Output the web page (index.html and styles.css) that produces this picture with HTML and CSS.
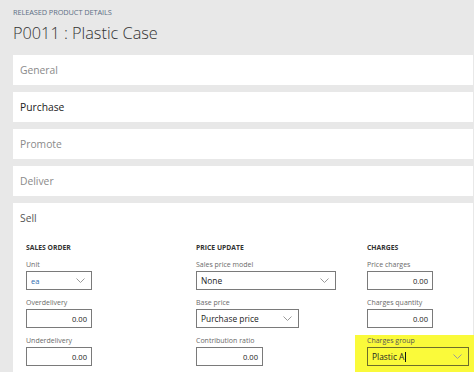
FILE: index.html
```html
<!DOCTYPE html>
<html lang="en">
<head>
    <meta charset="UTF-8">
    <title>Released product details</title>
    <link rel="stylesheet" href="styles.css">
</head>
<body>
    <div class="header">
        <div class="caption">RELEASED PRODUCT DETAILS</div>
        <h1 class="title">P0011 : Plastic Case</h1>
    </div>

    <div class="cards">
        <div class="card muted">General</div>
        <div class="card">Purchase</div>
        <div class="card muted">Promote</div>
        <div class="card muted">Deliver</div>

        <div class="card sell">
            <div class="sell-title">Sell</div>
            <div class="groups">
                <div class="group">
                    <div class="group-title">SALES ORDER</div>
                    <div class="field">
                        <div class="label">Unit</div>
                        <div class="box combo w66"><span class="link">ea</span>
                            <svg class="chev" width="9" height="5" viewBox="0 0 9 5"><polyline points="0.5,0.5 4.5,4.5 8.5,0.5"/></svg>
                        </div>
                    </div>
                    <div class="field">
                        <div class="label">Overdelivery</div>
                        <div class="box num w66">0.00</div>
                    </div>
                    <div class="field">
                        <div class="label">Underdelivery</div>
                        <div class="box num w66">0.00</div>
                    </div>
                </div>

                <div class="group">
                    <div class="group-title">PRICE UPDATE</div>
                    <div class="field">
                        <div class="label">Sales price model</div>
                        <div class="box combo big w140"><span>None</span>
                            <svg class="chev" width="9" height="5" viewBox="0 0 9 5"><polyline points="0.5,0.5 4.5,4.5 8.5,0.5"/></svg>
                        </div>
                    </div>
                    <div class="field">
                        <div class="label">Base price</div>
                        <div class="box combo big w103"><span>Purchase price</span>
                            <svg class="chev" width="9" height="5" viewBox="0 0 9 5"><polyline points="0.5,0.5 4.5,4.5 8.5,0.5"/></svg>
                        </div>
                    </div>
                    <div class="field">
                        <div class="label">Contribution ratio</div>
                        <div class="box num w67">0.00</div>
                    </div>
                </div>

                <div class="group">
                    <div class="group-title">CHARGES</div>
                    <div class="field">
                        <div class="label">Price charges</div>
                        <div class="box num w66">0.00</div>
                    </div>
                    <div class="field">
                        <div class="label">Charges quantity</div>
                        <div class="box num w66">0.00</div>
                    </div>
                    <div class="field highlight">
                        <div class="label">Charges group</div>
                        <div class="box combo big w102"><span>Plastic A<i class="caret"></i></span>
                            <svg class="chev" width="9" height="5" viewBox="0 0 9 5"><polyline points="0.5,0.5 4.5,4.5 8.5,0.5"/></svg>
                        </div>
                    </div>
                </div>
            </div>
        </div>
    </div>
</body>
</html>
```

FILE: styles.css
```css
body {
    margin: 0;
    height: 372px;
    overflow: hidden;
    background-color: #e8e8e8;
    font-family: "Open Sans", "Noto Sans", sans-serif;
    color: #333;
}

.header {
    padding: 7px 13px 0;
    height: 48px;
    box-sizing: border-box;
}

.caption {
    font-size: 7.4px;
    line-height: 10px;
    color: #5d6f86;
    letter-spacing: -0.1px;
}

.title {
    margin: 5px 0 0;
    font-size: 16.3px;
    font-weight: 300;
    line-height: 22px;
    color: #333;
}

.cards {
    padding: 7px 1px 0 13px;
}

.card {
    height: 30px;
    margin-bottom: 7px;
    padding-left: 7px;
    background-color: #fff;
    display: flex;
    align-items: center;
    font-size: 10.3px;
    color: #222;
}

.card.muted {
    color: #8a8a8a;
}

.card.sell {
    display: block;
    height: 170px;
    margin: 0;
}

.sell-title {
    height: 30px;
    line-height: 30px;
    color: #555;
}

.groups {
    display: grid;
    grid-template-columns: 170px 171px 1fr;
    padding: 9px 0 0 6px;
}

.group-title {
    font-size: 6.8px;
    font-weight: 700;
    line-height: 12px;
    color: #333;
    margin-bottom: 5px;
}

.field {
    margin-bottom: 7px;
}

.label {
    font-size: 7px;
    line-height: 12px;
    color: #6a6a6a;
}

.box {
    height: 19px;
    box-sizing: border-box;
    border: 1px solid #7a7a7a;
    background-color: #fff;
    font-size: 7.6px;
    color: #222;
    display: flex;
    align-items: center;
}

.box.num {
    justify-content: flex-end;
    padding-right: 4px;
}

.box.combo {
    justify-content: space-between;
    padding: 0 6px 0 4px;
}

.box.big {
    font-size: 8.4px;
}

.link {
    color: #2f6db0;
}

.chev {
    fill: none;
    stroke: #9a9a9a;
    stroke-width: 1;
}

.w66 { width: 66px; }
.w67 { width: 67px; }
.w102 { width: 102px; }
.w103 { width: 103px; }
.w140 { width: 140px; }

.highlight {
    margin: 0 -1px 0 -12px;
    padding: 0 0 20px 12px;
    background-color: #fafa3a;
}

.highlight .label {
    color: #555;
}

.highlight .box {
    background-color: transparent;
    border-color: #6d6d2a;
}

.caret {
    display: inline-block;
    width: 1px;
    height: 10px;
    margin-left: 1px;
    vertical-align: -2px;
    background-color: #111;
}
```
